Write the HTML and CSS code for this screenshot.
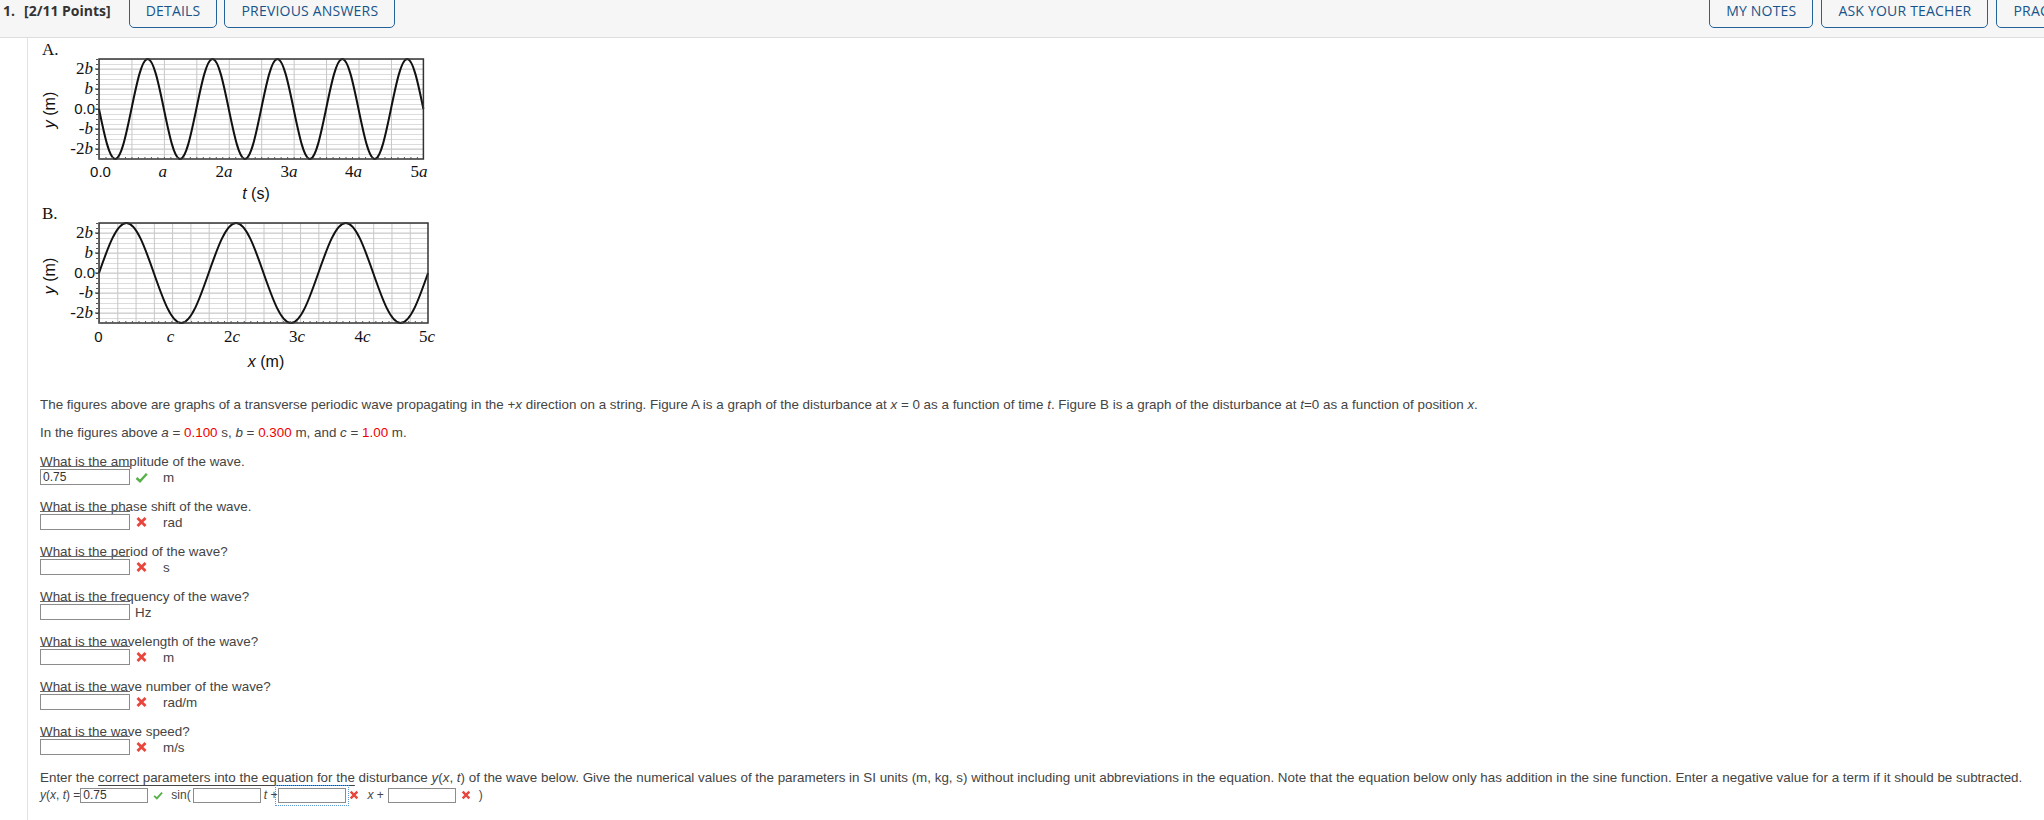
FILE: index.html
```html
<!DOCTYPE html>
<html lang="en">
<head>
    <meta charset="UTF-8">
    <title>Question 1</title>
    <link rel="stylesheet" href="styles.css">
</head>
<body>

    <!-- Top bar -->
    <header class="topbar">
        <span class="qnum">1.</span>
        <span class="qpoints">[2/11 Points]</span>
        <div class="btn-group">
            <span class="btn">DETAILS</span>
            <span class="btn">PREVIOUS ANSWERS</span>
        </div>
        <div class="btn-group right">
            <span class="btn">MY NOTES</span>
            <span class="btn">ASK YOUR TEACHER</span>
            <span class="btn">PRACTICE ANOTHER</span>
        </div>
    </header>

    <main class="question">

        <!-- Figure A -->
        <svg class="graph" width="420" height="167" viewBox="0 0 420 167">
            <defs>
                <pattern id="gridA" x="59" y="21" width="32.44" height="5" patternUnits="userSpaceOnUse">
                    <path d="M0 0.5H32.44" stroke="#dcdcdc"/>
                    <path d="M0.5 0V5" stroke="#c6c6c6"/>
                </pattern>
            </defs>
            <text x="2" y="17" class="g-fig">A.</text>
            <rect x="59" y="21" width="324.4" height="100" fill="url(#gridA)"/>
            <path d="M59 31H383M59 51H383M59 71H383M59 91H383M59 111H383" stroke="#cccccc"/>
            <path class="wave" d="M59 71
                c5.29,25.62 10.35,50 16.22,50 c5.87,0 10.93,-24.39 16.22,-50 c5.29,-25.62 10.35,-50 16.22,-50 c5.87,0 10.93,24.39 16.22,50
                c5.29,25.62 10.35,50 16.22,50 c5.87,0 10.93,-24.39 16.22,-50 c5.29,-25.62 10.35,-50 16.22,-50 c5.87,0 10.93,24.39 16.22,50
                c5.29,25.62 10.35,50 16.22,50 c5.87,0 10.93,-24.39 16.22,-50 c5.29,-25.62 10.35,-50 16.22,-50 c5.87,0 10.93,24.39 16.22,50
                c5.29,25.62 10.35,50 16.22,50 c5.87,0 10.93,-24.39 16.22,-50 c5.29,-25.62 10.35,-50 16.22,-50 c5.87,0 10.93,24.39 16.22,50
                c5.29,25.62 10.35,50 16.22,50 c5.87,0 10.93,-24.39 16.22,-50 c5.29,-25.62 10.35,-50 16.22,-50 c5.87,0 10.93,24.39 16.22,50"/>
            <rect x="59" y="21" width="324.4" height="100" class="frame"/>
            <path d="M57 21V121" class="tick-minor" stroke-dasharray="1 4"/>
            <path d="M59 120H383" class="tick-minor" stroke-dasharray="1 5.488"/>
            <path d="M55 31h4M55 51h4M55 71h4M55 91h4M55 111h4" class="tick"/>
            <text x="53" y="36" class="g-sym" text-anchor="end">2<tspan class="v">b</tspan></text>
            <text x="53" y="56" class="g-sym" text-anchor="end"><tspan class="v">b</tspan></text>
            <text x="55" y="76" class="g-num" text-anchor="end">0.0</text>
            <text x="53" y="96" class="g-sym" text-anchor="end">-<tspan class="v">b</tspan></text>
            <text x="53" y="116" class="g-sym" text-anchor="end">-2<tspan class="v">b</tspan></text>
            <text x="60.5" y="139" class="g-num" text-anchor="middle">0.0</text>
            <text x="122.7" y="139" class="g-sym" text-anchor="middle"><tspan class="v">a</tspan></text>
            <text x="184" y="139" class="g-sym" text-anchor="middle">2<tspan class="v">a</tspan></text>
            <text x="249" y="139" class="g-sym" text-anchor="middle">3<tspan class="v">a</tspan></text>
            <text x="313.5" y="139" class="g-sym" text-anchor="middle">4<tspan class="v">a</tspan></text>
            <text x="379" y="139" class="g-sym" text-anchor="middle">5<tspan class="v">a</tspan></text>
            <text x="216" y="161" class="g-axis" text-anchor="middle"><tspan class="v">t</tspan> (s)</text>
            <text class="g-axis" text-anchor="middle" transform="translate(15 72) rotate(-90)"><tspan class="v">y</tspan> (m)</text>
        </svg>

        <!-- Figure B -->
        <svg class="graph" width="420" height="170" viewBox="0 0 420 170">
            <defs>
                <pattern id="gridB" x="59" y="18" width="18.28" height="5" patternUnits="userSpaceOnUse">
                    <path d="M0 0.5H18.28" stroke="#dcdcdc"/>
                    <path d="M0.5 0V5" stroke="#c6c6c6"/>
                </pattern>
            </defs>
            <text x="2" y="14" class="g-fig">B.</text>
            <rect x="59" y="18" width="329" height="100" fill="url(#gridB)"/>
            <path d="M59 28H388M59 48H388M59 68H388M59 88H388M59 108H388" stroke="#cccccc"/>
            <path class="wave" d="M59 68
                c8.94,-25.62 17.50,-50 27.42,-50 c9.92,0 18.48,24.39 27.42,50 c8.94,25.62 17.50,50 27.42,50 c9.92,0 18.48,-24.39 27.42,-50
                c8.94,-25.62 17.50,-50 27.42,-50 c9.92,0 18.48,24.39 27.42,50 c8.94,25.62 17.50,50 27.42,50 c9.92,0 18.48,-24.39 27.42,-50
                c8.94,-25.62 17.50,-50 27.42,-50 c9.92,0 18.48,24.39 27.42,50 c8.94,25.62 17.50,50 27.42,50 c9.92,0 18.48,-24.39 27.42,-50"/>
            <rect x="59" y="18" width="329" height="100" class="frame"/>
            <path d="M57 18V118" class="tick-minor" stroke-dasharray="1 4"/>
            <path d="M59 117H388" class="tick-minor" stroke-dasharray="1 5.58"/>
            <path d="M55 28h4M55 48h4M55 68h4M55 88h4M55 108h4" class="tick"/>
            <text x="53" y="33" class="g-sym" text-anchor="end">2<tspan class="v">b</tspan></text>
            <text x="53" y="53" class="g-sym" text-anchor="end"><tspan class="v">b</tspan></text>
            <text x="55" y="73" class="g-num" text-anchor="end">0.0</text>
            <text x="53" y="93" class="g-sym" text-anchor="end">-<tspan class="v">b</tspan></text>
            <text x="53" y="113" class="g-sym" text-anchor="end">-2<tspan class="v">b</tspan></text>
            <text x="58.5" y="137" class="g-num" text-anchor="middle">0</text>
            <text x="130.5" y="137" class="g-sym" text-anchor="middle"><tspan class="v">c</tspan></text>
            <text x="192" y="137" class="g-sym" text-anchor="middle">2<tspan class="v">c</tspan></text>
            <text x="257" y="137" class="g-sym" text-anchor="middle">3<tspan class="v">c</tspan></text>
            <text x="322.5" y="137" class="g-sym" text-anchor="middle">4<tspan class="v">c</tspan></text>
            <text x="387" y="137" class="g-sym" text-anchor="middle">5<tspan class="v">c</tspan></text>
            <text x="226" y="162" class="g-axis" text-anchor="middle"><tspan class="v">x</tspan> (m)</text>
            <text class="g-axis" text-anchor="middle" transform="translate(15 71) rotate(-90)"><tspan class="v">y</tspan> (m)</text>
        </svg>

        <p class="intro">The figures above are graphs of a transverse periodic wave propagating in the +<i>x</i> direction on a string. Figure A is a graph of the disturbance at <i>x</i> = 0 as a function of time <i>t</i>. Figure B is a graph of the disturbance at <i>t</i>=0 as a function of position <i>x</i>.</p>
        <p class="given">In the figures above <i>a</i> = <span class="val">0.100</span> s, <i>b</i> = <span class="val">0.300</span> m, and <i>c</i> = <span class="val">1.00</span> m.</p>

        <div class="questions">
            <div class="q">
                <div class="q-label">What is the amplitude of the wave.</div>
                <div class="q-row">
                    <span class="ans"><input type="text" value="0.75"></span>
                    <svg class="mark" width="13" height="11" viewBox="0 0 13 11"><path d="M1.5 6L5 9.2L11.8 1.8" class="ok"/></svg>
                    <span class="unit">m</span>
                </div>
            </div>
            <div class="q">
                <div class="q-label">What is the phase shift of the wave.</div>
                <div class="q-row">
                    <span class="ans"><input type="text"></span>
                    <svg class="mark" width="13" height="12" viewBox="0 0 12 12"><path d="M2 2L10 10M10 2L2 10" class="bad"/></svg>
                    <span class="unit">rad</span>
                </div>
            </div>
            <div class="q">
                <div class="q-label">What is the period of the wave?</div>
                <div class="q-row">
                    <span class="ans"><input type="text"></span>
                    <svg class="mark" width="13" height="12" viewBox="0 0 12 12"><path d="M2 2L10 10M10 2L2 10" class="bad"/></svg>
                    <span class="unit">s</span>
                </div>
            </div>
            <div class="q">
                <div class="q-label">What is the frequency of the wave?</div>
                <div class="q-row">
                    <span class="ans"><input type="text"></span>
                    <span class="unit">Hz</span>
                </div>
            </div>
            <div class="q">
                <div class="q-label">What is the wavelength of the wave?</div>
                <div class="q-row">
                    <span class="ans"><input type="text"></span>
                    <svg class="mark" width="13" height="12" viewBox="0 0 12 12"><path d="M2 2L10 10M10 2L2 10" class="bad"/></svg>
                    <span class="unit">m</span>
                </div>
            </div>
            <div class="q">
                <div class="q-label">What is the wave number of the wave?</div>
                <div class="q-row">
                    <span class="ans"><input type="text"></span>
                    <svg class="mark" width="13" height="12" viewBox="0 0 12 12"><path d="M2 2L10 10M10 2L2 10" class="bad"/></svg>
                    <span class="unit">rad/m</span>
                </div>
            </div>
            <div class="q">
                <div class="q-label">What is the wave speed?</div>
                <div class="q-row">
                    <span class="ans"><input type="text"></span>
                    <svg class="mark" width="13" height="12" viewBox="0 0 12 12"><path d="M2 2L10 10M10 2L2 10" class="bad"/></svg>
                    <span class="unit">m/s</span>
                </div>
            </div>
        </div>

        <p class="eq-intro">Enter the <span class="uline">correct parameters into the equation for the</span> disturbance <i>y</i>(<i>x</i>, <i>t</i>) of the wave below. Give the numerical values of the parameters in SI units (m, kg, s) without including unit abbreviations in the equation. Note that the equation below only has addition in the sine function. Enter a negative value for a term if it should be subtracted.</p>
        <div class="eq-row">
            <span class="eq-lhs"><i>y</i>(<i>x</i>, <i>t</i>) =</span>
            <input type="text" class="eq-in" value="0.75">
            <svg class="eq-ok" width="10" height="9" viewBox="0 0 13 11"><path d="M1.5 6L5 9.2L11.8 1.8" class="ok"/></svg>
            <span class="eq-sin">sin(</span>
            <input type="text" class="eq-in">
            <span class="eq-t"><i>t</i> +</span>
            <input type="text" class="eq-in focus">
            <svg class="eq-bad" width="10" height="10" viewBox="0 0 12 12"><path d="M2 2L10 10M10 2L2 10" class="bad"/></svg>
            <span class="eq-x"><i>x</i> +</span>
            <input type="text" class="eq-in">
            <svg class="eq-bad last" width="10" height="10" viewBox="0 0 12 12"><path d="M2 2L10 10M10 2L2 10" class="bad"/></svg>
            <span class="eq-close">)</span>
        </div>

    </main>

</body>
</html>
```

FILE: styles.css
```css
body {
    margin: 0;
    font-family: "Liberation Sans", Arial, sans-serif;
    font-size: 13.4px;
    color: #444;
    background-color: #fff;
    overflow: hidden;
}
.topbar {
    display: flex;
    align-items: flex-start;
    height: 37px;
    padding-left: 3px;
    background-color: #f6f6f6;
    border-bottom: 1px solid #dedede;
    font-family: "Open Sans", sans-serif;
    font-size: 14px;
    line-height: 22px;
}
.qnum {
    font-weight: bold;
    color: #333;
    margin-right: 9px;
}
.qpoints {
    font-weight: bold;
    color: #333;
}
.btn-group {
    display: flex;
    gap: 7px;
    margin-left: 18px;
}
.btn-group.right {
    gap: 8px;
    margin-left: auto;
    margin-right: -121px;
}
.btn {
    flex-shrink: 0;
    box-sizing: border-box;
    height: 34px;
    margin-top: -6px;
    padding: 6px 16px 0;
    border: 1px solid #24639a;
    border-radius: 5px;
    color: #18548a;
    line-height: 20px;
    letter-spacing: 0.2px;
    white-space: nowrap;
}
.question {
    margin-left: 27px;
    padding-left: 12px;
    border-left: 1px solid #e2e2e2;
    min-height: 782px;
}
.graph {
    display: block;
    overflow: visible;
}
.graph text {
    fill: #111;
}
.g-fig {
    font: 17px "Liberation Serif", serif;
}
.g-num {
    font: 15px "Liberation Sans", Arial, sans-serif;
}
.g-sym {
    font: 17px "Liberation Serif", serif;
}
.g-axis {
    font: 16px "Liberation Sans", Arial, sans-serif;
}
.graph .v {
    font-style: italic;
}
.wave {
    fill: none;
    stroke: #111;
    stroke-width: 2;
}
.frame {
    fill: none;
    stroke: #333;
    stroke-width: 1.5;
}
.tick {
    stroke: #333;
    stroke-width: 1;
}
.tick-minor {
    stroke: #555;
    stroke-width: 2;
}
p {
    margin: 0;
    line-height: 16px;
}
.intro {
    margin-top: 22px;
}
.given {
    margin-top: 12px;
}
.val {
    color: #e00;
}
.questions {
    margin-top: 13px;
}
.q {
    margin-bottom: 14px;
}
.q-label {
    line-height: 15px;
}
.q-row {
    display: flex;
    align-items: center;
    height: 16px;
}
.ans {
    position: relative;
    display: block;
}
.ans::before {
    content: "";
    position: absolute;
    left: 0;
    right: 0;
    top: -3px;
    border-top: 1px solid #6a6a6a;
}
input {
    display: block;
    box-sizing: border-box;
    margin: 0;
    padding: 0 2px;
    border: 1px solid #8c8c8c;
    border-radius: 0;
    background: #fff;
    font-family: "Liberation Sans", Arial, sans-serif;
    font-size: 12px;
    color: #333;
}
.ans input {
    width: 90px;
    height: 16px;
}
.mark {
    display: block;
    margin-left: 5px;
}
.unit {
    margin-left: 5px;
}
.mark + .unit {
    margin-left: 15px;
}
.ok {
    fill: none;
    stroke: #55b048;
    stroke-width: 2.4;
}
.bad {
    fill: none;
    stroke: #e8453c;
    stroke-width: 2.8;
}
.eq-intro {
    margin-top: 15px;
}
.uline {
    text-decoration: underline;
    text-underline-offset: 3px;
}
.eq-row {
    display: flex;
    align-items: center;
    height: 18px;
    font-size: 12px;
}
.eq-in {
    width: 68px;
    height: 15px;
}
.eq-in.focus {
    outline: 1px dotted #5b9bd5;
    outline-offset: 2px;
}
.eq-ok {
    display: block;
    margin: 0 8px 0 5px;
}
.eq-sin {
    margin-right: 2px;
}
.eq-t {
    margin: 0 1px 0 3px;
}
.eq-bad {
    display: block;
    margin: 0 8px 0 3px;
}
.eq-x {
    margin-right: 4px;
}
.eq-bad.last {
    margin-left: 5px;
}
```
